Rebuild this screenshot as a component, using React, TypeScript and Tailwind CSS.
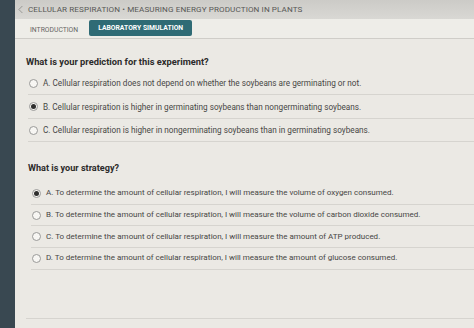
import { ChevronLeft } from 'lucide-react';

const prediction = [
  'A. Cellular respiration does not depend on whether the soybeans are germinating or not.',
  'B. Cellular respiration is higher in germinating soybeans than nongerminating soybeans.',
  'C. Cellular respiration is higher in nongerminating soybeans than in germinating soybeans.',
];

const strategy = [
  'A. To determine the amount of cellular respiration, I will measure the volume of oxygen consumed.',
  'B. To determine the amount of cellular respiration, I will measure the volume of carbon dioxide consumed.',
  'C. To determine the amount of cellular respiration, I will measure the amount of ATP produced.',
  'D. To determine the amount of cellular respiration, I will measure the amount of glucose consumed.',
];

function Radio({ checked }: { checked: boolean }) {
  return (
    <span className="flex h-[9px] w-[9px] shrink-0 items-center justify-center rounded-full border border-[#9a9a98] bg-[#f7f6f3]">
      {checked && <span className="h-[5px] w-[5px] rounded-full bg-[#2e2e2e]" />}
    </span>
  );
}

function Option({ text, checked, h, size }: { text: string; checked: boolean; h: string; size: string }) {
  return (
    <div className={`flex items-center gap-[5px] border-b border-[#d6d4cf] pl-[1px] ${h}`}>
      <Radio checked={checked} />
      <span className={`whitespace-nowrap text-[#474745] ${size}`}>{text}</span>
    </div>
  );
}

export default function App() {
  return (
    <div className="flex h-[328px] w-[474px] overflow-hidden font-['Roboto',sans-serif]">
      <div className="w-[15px] shrink-0 bg-[#394851]" />
      <div className="flex flex-1 flex-col bg-[#ebe9e4]">
        <div className="flex h-[19px] items-center bg-gradient-to-b from-[#cccbc7] to-[#d9d8d4]">
          <ChevronLeft size={13} strokeWidth={1.5} className="ml-[-1px] text-[#8a8a88]" />
          <span className="ml-[1px] text-[8.1px] tracking-[0.1px] text-[#575755]">
            CELLULAR RESPIRATION • MEASURING ENERGY PRODUCTION IN PLANTS
          </span>
        </div>
        <div className="flex h-[20px] items-start border-b border-[#cfcdc8] bg-[#eeede8]">
          <span className="ml-[15px] mt-[6px] text-[6.8px] text-[#666664]">INTRODUCTION</span>
          <span className="ml-[11px] mt-[1px] flex h-[16px] w-[103px] items-center justify-center rounded-[2px] bg-[#2f6b75] text-[6.8px] font-bold text-white">
            LABORATORY SIMULATION
          </span>
        </div>
        <div className="flex flex-1 flex-col pl-[11px]">
          <div className="mt-[16px] text-[9.3px] font-bold text-[#2b2b2a]">
            What is your prediction for this experiment?
          </div>
          <div className="ml-[2px] mt-[3px] flex flex-col">
            {prediction.map((t, i) => (
              <Option key={t} text={t} checked={i === 1} h="h-[23.5px]" size="text-[8.2px]" />
            ))}
          </div>
          <div className="ml-[2px] mt-[20px] text-[9.1px] font-bold text-[#2b2b2a]">
            What is your strategy?
          </div>
          <div className="ml-[5px] mt-[7px] flex flex-col">
            {strategy.map((t, i) => (
              <Option key={t} text={t} checked={i === 0} h="h-[21.7px]" size="text-[8px]" />
            ))}
          </div>
          <div className="mt-[48px] border-b border-[#d6d4cf]" />
        </div>
      </div>
    </div>
  );
}
